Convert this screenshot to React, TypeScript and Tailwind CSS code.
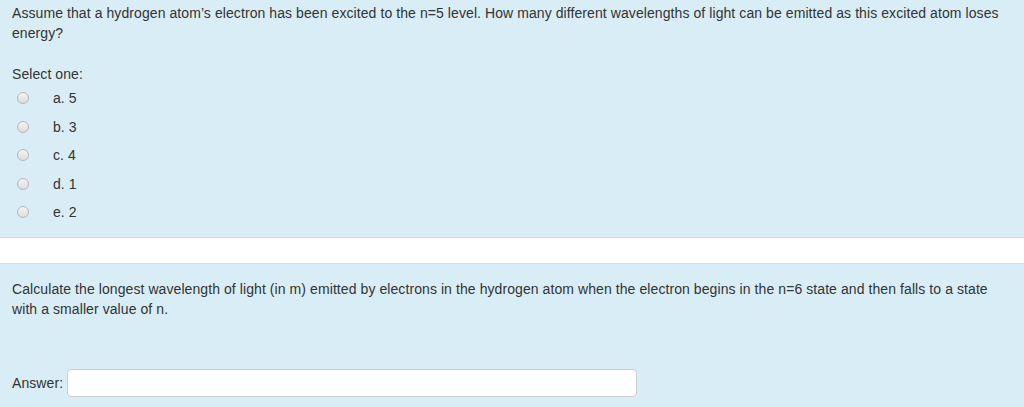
const options = ["a. 5", "b. 3", "c. 4", "d. 1", "e. 2"];

function Radio() {
  return (
    <span className="block h-3 w-3 shrink-0 rounded-full border border-[#b5b5b5] bg-gradient-to-b from-[#f4f4f4] to-[#dedede]" />
  );
}

export default function App() {
  return (
    <div className="h-[407px] w-[1024px] overflow-hidden bg-white font-['Liberation_Sans',Arial,sans-serif] text-[14px] leading-[20px] tracking-[0.08px] text-[#333]">
      <div className="h-[238px] border-b border-[#bce8f1] bg-[#d9edf7] px-3 pt-[3px]">
        <p>
          Assume that a hydrogen atom’s electron has been excited to the n=5 level. How many different
          wavelengths of light can be emitted as this excited atom loses energy?
        </p>
        <p className="mt-[21px]">Select one:</p>
        <div className="flex flex-col">
          {options.map((o) => (
            <label key={o} className="flex h-[28.5px] items-center">
              <span className="ml-[5px] mr-[24px]">
                <Radio />
              </span>
              <span>{o}</span>
            </label>
          ))}
        </div>
      </div>

      <div className="mt-[25px] h-[200px] border-t border-[#bce8f1] bg-[#d9edf7] px-3 pt-[15px]">
        <p>
          Calculate the longest wavelength of light (in m) emitted by electrons in the hydrogen atom when
          the electron begins in the n=6 state and then falls to a state with a smaller value of n.
        </p>
        <div className="mt-[50px] flex items-center gap-[4px]">
          <span>Answer:</span>
          <input
            type="text"
            className="h-[28px] w-[570px] rounded-[4px] border border-[#ccc] bg-white px-2 outline-none"
          />
        </div>
      </div>
    </div>
  );
}
